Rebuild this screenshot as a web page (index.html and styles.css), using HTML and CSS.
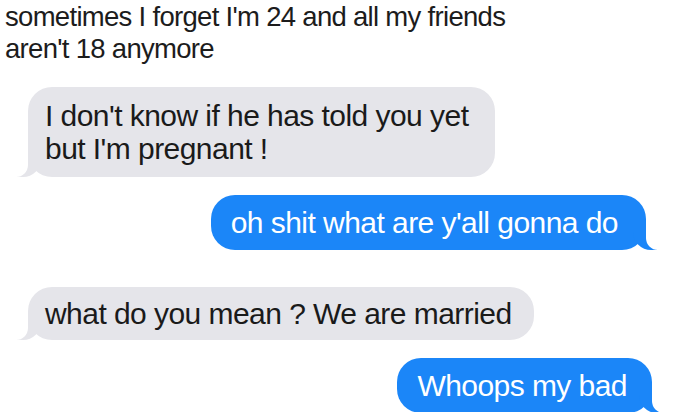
FILE: index.html
```html
<!DOCTYPE html>
<html lang="en">
<head>
    <meta charset="UTF-8">
    <meta name="viewport" content="width=device-width, initial-scale=1.0">
    <title>Texts</title>
    <link rel="stylesheet" href="styles.css">
</head>
<body>
    <p class="caption">sometimes I forget I'm 24 and all my friends<br>aren't 18 anymore</p>

    <div class="thread">
        <div class="bubble them first">I don't know if he has told you yet<br>but I'm pregnant !</div>
        <div class="bubble me">oh shit what are y'all gonna do</div>
        <div class="bubble them gap">what do you mean ? We are married</div>
        <div class="bubble me last">Whoops my bad</div>
    </div>
</body>
</html>
```

FILE: styles.css
```css
body {
    font-family: "Liberation Sans", Arial, sans-serif;
    background-color: #fff;
    margin: 0;
    overflow: hidden;
}
.caption {
    margin: 0;
    padding: 1px 0 0 5px;
    font-size: 27.5px;
    line-height: 32px;
    letter-spacing: -0.7px;
    color: #1c1c1c;
}
.thread {
    display: flex;
    flex-direction: column;
    padding: 0 28px 0 28px;
}
.bubble {
    position: relative;
    font-size: 30px;
    line-height: 33px;
    letter-spacing: -0.55px;
    border-radius: 24px;
}
.them {
    align-self: flex-start;
    background-color: #e5e5ea;
    color: #1a1a1a;
    padding: 10px 27px 10px 17px;
}
.me {
    align-self: flex-end;
    background-color: #1b86f8;
    color: #fff;
    margin-top: 18px;
    padding: 11px 28px 11px 20px;
}
.first {
    margin-top: 22px;
    padding-top: 12px;
    padding-bottom: 12px;
}
.gap {
    margin-top: 37px;
    padding-right: 22px;
}
.last {
    margin-right: -6px;
    padding-right: 25px;
}
.them::before, .me::before {
    content: "";
    position: absolute;
    bottom: 0;
    height: 24px;
    width: 24px;
}
.them::before {
    left: -11px;
    background-color: #e5e5ea;
    border-bottom-right-radius: 18px;
}
.me::before {
    right: -11px;
    background-color: #1b86f8;
    border-bottom-left-radius: 18px;
}
.them::after, .me::after {
    content: "";
    position: absolute;
    bottom: 0;
    height: 24px;
    width: 14px;
    background-color: #fff;
}
.them::after {
    left: -14px;
    border-bottom-right-radius: 12px;
}
.me::after {
    right: -14px;
    border-bottom-left-radius: 12px;
}
```
